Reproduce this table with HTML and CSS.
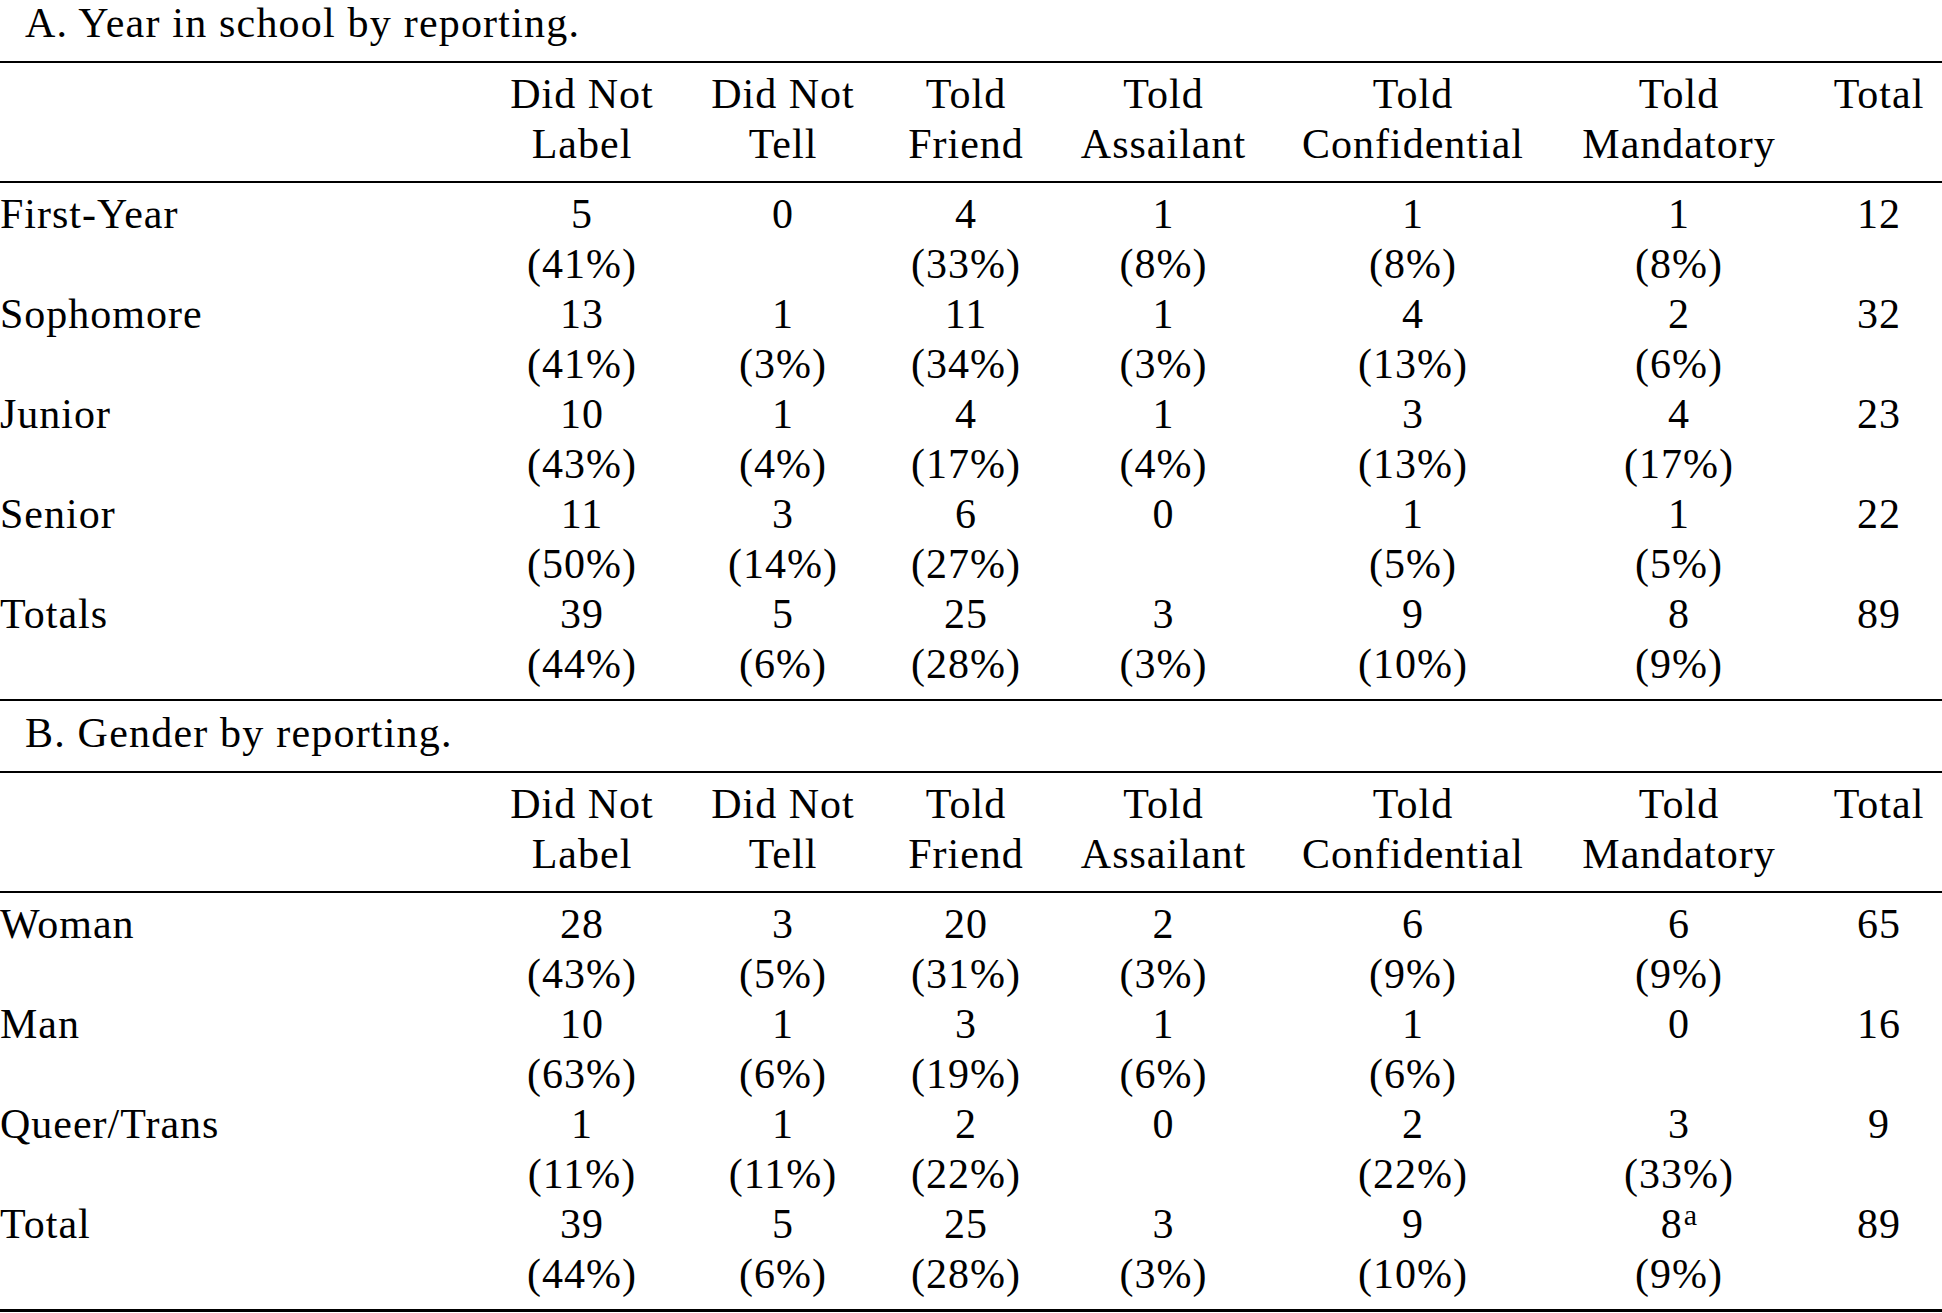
FILE: index.html
```html
<!DOCTYPE html>
<html lang="en">
<head>
<meta charset="utf-8">
<title>Reporting tables</title>
<link rel="stylesheet" href="styles.css">
</head>
<body>
<section class="panel">
  <div class="panel-title">A. Year in school by reporting.</div>
  <table class="data">
    <colgroup>
      <col class="c-label"><col class="c1"><col class="c2"><col class="c3"><col class="c4"><col class="c5"><col class="c6"><col class="c7">
    </colgroup>
    <thead>
      <tr><th></th><th>Did Not<br>Label</th><th>Did Not<br>Tell</th><th>Told<br>Friend</th><th>Told<br>Assailant</th><th>Told<br>Confidential</th><th>Told<br>Mandatory</th><th>Total</th></tr>
    </thead>
    <tbody>
      <tr><td class="lab">First-Year</td><td>5<br>(41%)</td><td>0</td><td>4<br>(33%)</td><td>1<br>(8%)</td><td>1<br>(8%)</td><td>1<br>(8%)</td><td>12</td></tr>
      <tr><td class="lab">Sophomore</td><td>13<br>(41%)</td><td>1<br>(3%)</td><td>11<br>(34%)</td><td>1<br>(3%)</td><td>4<br>(13%)</td><td>2<br>(6%)</td><td>32</td></tr>
      <tr><td class="lab">Junior</td><td>10<br>(43%)</td><td>1<br>(4%)</td><td>4<br>(17%)</td><td>1<br>(4%)</td><td>3<br>(13%)</td><td>4<br>(17%)</td><td>23</td></tr>
      <tr><td class="lab">Senior</td><td>11<br>(50%)</td><td>3<br>(14%)</td><td>6<br>(27%)</td><td>0</td><td>1<br>(5%)</td><td>1<br>(5%)</td><td>22</td></tr>
      <tr><td class="lab">Totals</td><td>39<br>(44%)</td><td>5<br>(6%)</td><td>25<br>(28%)</td><td>3<br>(3%)</td><td>9<br>(10%)</td><td>8<br>(9%)</td><td>89</td></tr>
    </tbody>
  </table>
</section>
<section class="panel">
  <div class="panel-title panel-title--after">B. Gender by reporting.</div>
  <table class="data data--last">
    <colgroup>
      <col class="c-label"><col class="c1"><col class="c2"><col class="c3"><col class="c4"><col class="c5"><col class="c6"><col class="c7">
    </colgroup>
    <thead>
      <tr><th></th><th>Did Not<br>Label</th><th>Did Not<br>Tell</th><th>Told<br>Friend</th><th>Told<br>Assailant</th><th>Told<br>Confidential</th><th>Told<br>Mandatory</th><th>Total</th></tr>
    </thead>
    <tbody>
      <tr><td class="lab">Woman</td><td>28<br>(43%)</td><td>3<br>(5%)</td><td>20<br>(31%)</td><td>2<br>(3%)</td><td>6<br>(9%)</td><td>6<br>(9%)</td><td>65</td></tr>
      <tr><td class="lab">Man</td><td>10<br>(63%)</td><td>1<br>(6%)</td><td>3<br>(19%)</td><td>1<br>(6%)</td><td>1<br>(6%)</td><td>0</td><td>16</td></tr>
      <tr><td class="lab">Queer/Trans</td><td>1<br>(11%)</td><td>1<br>(11%)</td><td>2<br>(22%)</td><td>0</td><td>2<br>(22%)</td><td>3<br>(33%)</td><td>9</td></tr>
      <tr><td class="lab">Total</td><td>39<br>(44%)</td><td>5<br>(6%)</td><td>25<br>(28%)</td><td>3<br>(3%)</td><td>9<br>(10%)</td><td>8<sup class="fn">a</sup><br>(9%)</td><td>89</td></tr>
    </tbody>
  </table>
</section>
</body>
</html>
```
FILE: styles.css
```css
html, body {
  margin: 0;
  padding: 0;
  background: #ffffff;
  overflow: hidden;
}

body {
  width: 1942px;
  color: #000000;
  font-family: "Liberation Serif", "Times New Roman", serif;
  font-size: 42px;
  letter-spacing: 1px;
}

.panel-title {
  line-height: 46px;
  padding: 0 0 15px 25px;
  letter-spacing: 1.2px;
}

.panel-title--after {
  padding-top: 9px;
}

.data {
  width: 100%;
  table-layout: fixed;
  border-collapse: separate;
  border-spacing: 0;
  border-top: 2px solid #000;
  border-bottom: 2px solid #000;
  line-height: 50px;
}

.data--last {
  border-bottom-width: 3px;
}

.c-label { width: 487px; }
.c1 { width: 190px; }
.c2 { width: 212px; }
.c3 { width: 154px; }
.c4 { width: 241px; }
.c5 { width: 258px; }
.c6 { width: 274px; }
.c7 { width: 126px; }

.data th,
.data td {
  padding: 0;
  text-align: center;
  vertical-align: top;
  font-weight: normal;
  white-space: nowrap;
}

.data thead th {
  padding-top: 6px;
  padding-bottom: 12px;
  border-bottom: 2px solid #000;
}

.data tbody tr:first-child td {
  padding-top: 6px;
}

.data tbody tr:last-child td {
  padding-bottom: 10px;
}

.data td.lab {
  text-align: left;
}

.fn {
  font-size: 30px;
  line-height: 0;
  vertical-align: 13px;
  letter-spacing: 0;
  margin-left: 1px;
}
```
